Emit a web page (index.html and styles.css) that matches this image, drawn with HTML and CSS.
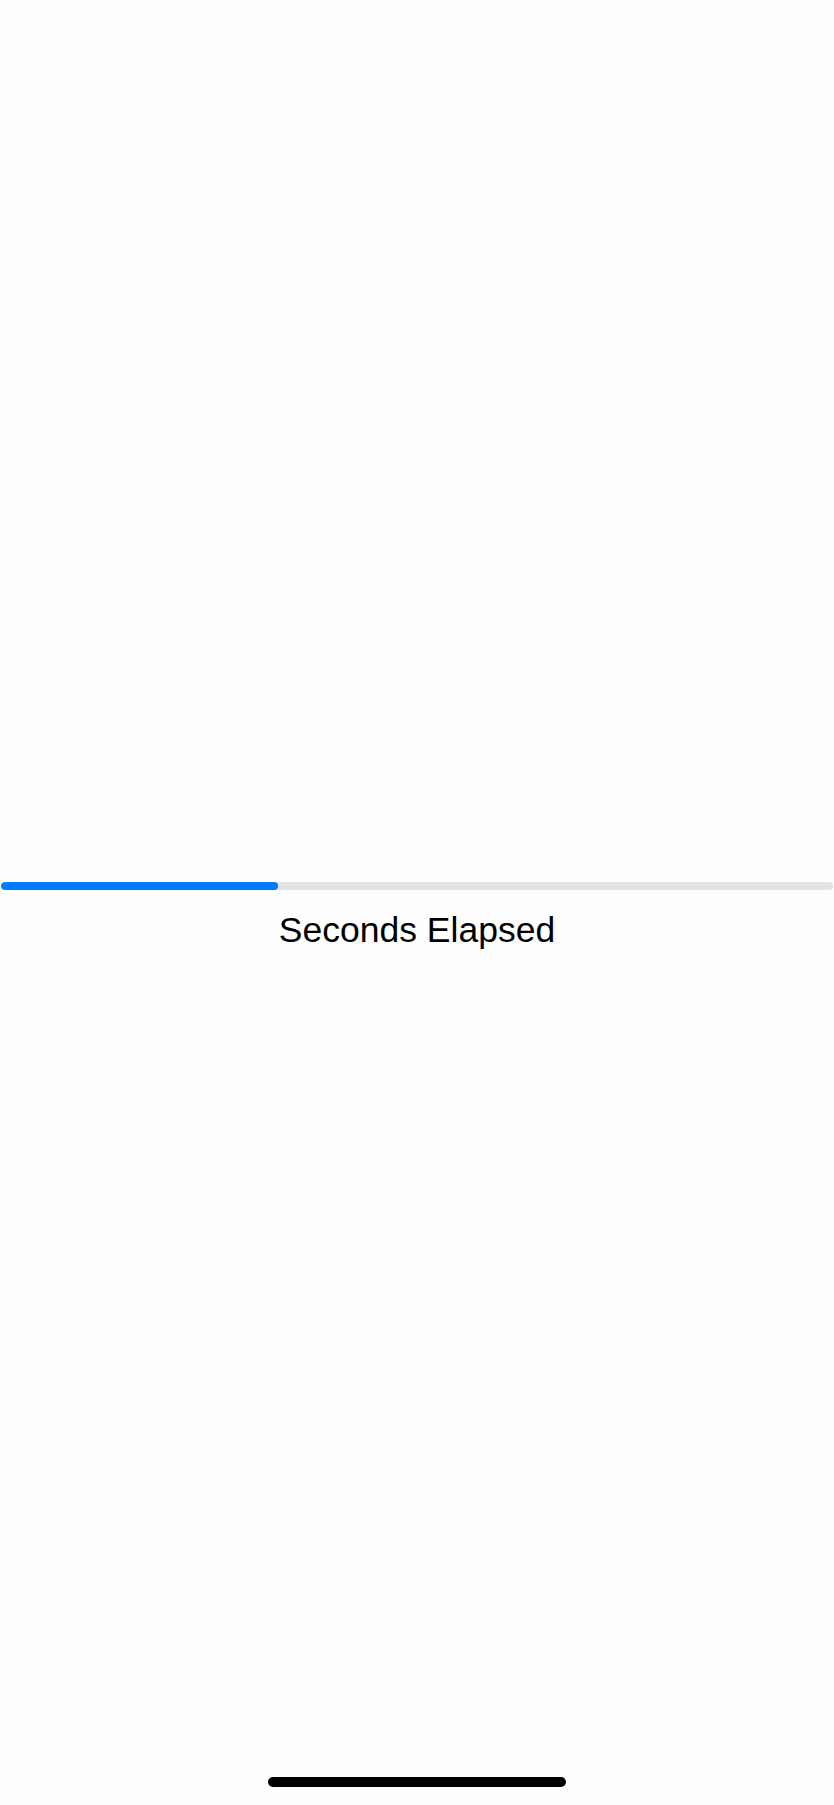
FILE: index.html
```html
<!DOCTYPE html>
<html lang="en">
<head>
<meta charset="utf-8">
<title>Seconds Elapsed</title>
<link rel="stylesheet" href="styles.css">
</head>
<body>
<div class="screen">
  <main class="content">
    <div class="progress">
      <div class="progress-fill" style="width: 33.33%"></div>
    </div>
    <p class="label">Seconds Elapsed</p>
  </main>
  <div class="home-indicator"></div>
</div>
</body>
</html>
```

FILE: styles.css
```css
* {
  box-sizing: border-box;
}

html, body {
  margin: 0;
  padding: 0;
  background: #fefefe;
}

.screen {
  width: 834px;
  height: 1805px;
  display: flex;
  flex-direction: column;
  align-items: center;
  font-family: "Liberation Sans", Arial, sans-serif;
}

.content {
  flex: 1;
  width: 100%;
  padding: 882px 1px 0;
  display: flex;
  flex-direction: column;
  align-items: center;
}

.progress {
  width: 100%;
  height: 8px;
  border-radius: 4px;
  background: #e3e3e3;
  overflow: hidden;
}

.progress-fill {
  height: 100%;
  border-radius: 4px;
  background: #007aff;
}

.label {
  margin: 20px 0 0;
  font-size: 35.5px;
  line-height: 40px;
  color: #000;
}

.home-indicator {
  width: 298px;
  height: 10px;
  border-radius: 5px;
  background: #000;
  margin-bottom: 18px;
}
```
